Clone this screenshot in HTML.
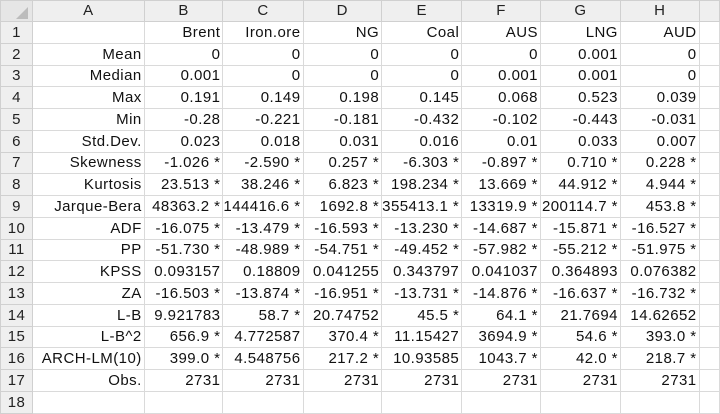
<!DOCTYPE html>
<html><head><meta charset="utf-8"><style>
body{margin:0;width:720px;height:413px;overflow:hidden;background:#fff;font-family:"Liberation Sans","Noto Sans CJK SC",sans-serif;font-size:15px;letter-spacing:0.45px;color:#111}
table{border-collapse:collapse;table-layout:fixed;position:absolute;left:0;top:0}
tr{height:21.75px}
tr.h{height:21px}
td{border:1px solid #dadada;padding:1px 2px 0 0;text-align:right;white-space:nowrap;overflow:visible;line-height:16px;vertical-align:middle}
tr.h td{background:#efefef;text-align:center;color:#222;border-color:#d0d0d0;padding:0}
td.r{background:#efefef;text-align:center;padding:1px 0 0 0;color:#222;border-color:#d0d0d0}
tr.h td.c{background:#e6e6e6;padding:0;line-height:0}
</style></head><body>
<table>
<colgroup><col style="width:31px"><col style="width:112px"><col style="width:79px"><col style="width:80px"><col style="width:79px"><col style="width:80px"><col style="width:79px"><col style="width:80px"><col style="width:79px"><col style="width:21px"></colgroup>
<tr class="h"><td class="c"><svg width="31" height="19"><polygon points="27,5 27,17 15,17" fill="#bcbcbc"/></svg></td><td>A</td><td>B</td><td>C</td><td>D</td><td>E</td><td>F</td><td>G</td><td>H</td><td></td></tr>
<tr><td class="r">1</td><td></td><td>Brent</td><td>Iron.ore</td><td>NG</td><td>Coal</td><td>AUS</td><td>LNG</td><td>AUD</td><td></td></tr>
<tr><td class="r">2</td><td>Mean</td><td>0</td><td>0</td><td>0</td><td>0</td><td>0</td><td>0.001</td><td>0</td><td></td></tr>
<tr><td class="r">3</td><td>Median</td><td>0.001</td><td>0</td><td>0</td><td>0</td><td>0.001</td><td>0.001</td><td>0</td><td></td></tr>
<tr><td class="r">4</td><td>Max</td><td>0.191</td><td>0.149</td><td>0.198</td><td>0.145</td><td>0.068</td><td>0.523</td><td>0.039</td><td></td></tr>
<tr><td class="r">5</td><td>Min</td><td>-0.28</td><td>-0.221</td><td>-0.181</td><td>-0.432</td><td>-0.102</td><td>-0.443</td><td>-0.031</td><td></td></tr>
<tr><td class="r">6</td><td>Std.Dev.</td><td>0.023</td><td>0.018</td><td>0.031</td><td>0.016</td><td>0.01</td><td>0.033</td><td>0.007</td><td></td></tr>
<tr><td class="r">7</td><td>Skewness</td><td>-1.026 *</td><td>-2.590 *</td><td>0.257 *</td><td>-6.303 *</td><td>-0.897 *</td><td>0.710 *</td><td>0.228 *</td><td></td></tr>
<tr><td class="r">8</td><td>Kurtosis</td><td>23.513 *</td><td>38.246 *</td><td>6.823 *</td><td>198.234 *</td><td>13.669 *</td><td>44.912 *</td><td>4.944 *</td><td></td></tr>
<tr><td class="r">9</td><td>Jarque-Bera</td><td>48363.2 *</td><td>144416.6 *</td><td>1692.8 *</td><td>355413.1 *</td><td>13319.9 *</td><td>200114.7 *</td><td>453.8 *</td><td></td></tr>
<tr><td class="r">10</td><td>ADF</td><td>-16.075 *</td><td>-13.479 *</td><td>-16.593 *</td><td>-13.230 *</td><td>-14.687 *</td><td>-15.871 *</td><td>-16.527 *</td><td></td></tr>
<tr><td class="r">11</td><td>PP</td><td>-51.730 *</td><td>-48.989 *</td><td>-54.751 *</td><td>-49.452 *</td><td>-57.982 *</td><td>-55.212 *</td><td>-51.975 *</td><td></td></tr>
<tr><td class="r">12</td><td>KPSS</td><td>0.093157</td><td>0.18809</td><td>0.041255</td><td>0.343797</td><td>0.041037</td><td>0.364893</td><td>0.076382</td><td></td></tr>
<tr><td class="r">13</td><td>ZA</td><td>-16.503 *</td><td>-13.874 *</td><td>-16.951 *</td><td>-13.731 *</td><td>-14.876 *</td><td>-16.637 *</td><td>-16.732 *</td><td></td></tr>
<tr><td class="r">14</td><td>L-B</td><td>9.921783</td><td>58.7 *</td><td>20.74752</td><td>45.5 *</td><td>64.1 *</td><td>21.7694</td><td>14.62652</td><td></td></tr>
<tr><td class="r">15</td><td>L-B^2</td><td>656.9 *</td><td>4.772587</td><td>370.4 *</td><td>11.15427</td><td>3694.9 *</td><td>54.6 *</td><td>393.0 *</td><td></td></tr>
<tr><td class="r">16</td><td>ARCH-LM(10)</td><td>399.0 *</td><td>4.548756</td><td>217.2 *</td><td>10.93585</td><td>1043.7 *</td><td>42.0 *</td><td>218.7 *</td><td></td></tr>
<tr><td class="r">17</td><td>Obs.</td><td>2731</td><td>2731</td><td>2731</td><td>2731</td><td>2731</td><td>2731</td><td>2731</td><td></td></tr>
<tr><td class="r">18</td><td></td><td></td><td></td><td></td><td></td><td></td><td></td><td></td><td></td></tr>
</table>
</body></html>
